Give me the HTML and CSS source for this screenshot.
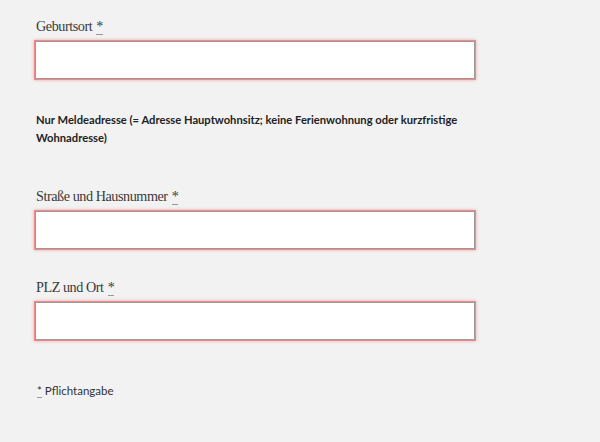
FILE: index.html
```html
<!DOCTYPE html>
<html lang="de">
<head>
<meta charset="utf-8">
<link rel="stylesheet" href="styles.css">
</head>
<body>
<form class="form">
  <div class="field field-first">
    <label class="label" for="geburtsort">Geburtsort <abbr class="req">*</abbr></label>
    <input class="input" id="geburtsort" type="text">
  </div>
  <p class="note">Nur Meldeadresse (= Adresse Hauptwohnsitz; keine Ferienwohnung oder kurzfristige Wohnadresse)</p>
  <div class="field field-street">
    <label class="label" for="strasse">Straße und Hausnummer <abbr class="req">*</abbr></label>
    <input class="input" id="strasse" type="text">
  </div>
  <div class="field field-plz">
    <label class="label" for="plz">PLZ und Ort <abbr class="req">*</abbr></label>
    <input class="input" id="plz" type="text">
  </div>
  <p class="legend"><abbr class="req">*</abbr> Pflichtangabe</p>
</form>
</body>
</html>
```
FILE: styles.css
```css
html, body {
  margin: 0;
  padding: 0;
  background: #f2f2f2;
}
.form {
  width: 440px;
  padding: 17px 0 0 35px;
}
.field {
  display: flex;
  flex-direction: column;
}
.label {
  font-family: "Liberation Serif", serif;
  font-size: 14.2px;
  letter-spacing: -0.45px;
  line-height: 18px;
  color: #3a3a3a;
  padding-left: 1px;
  margin-bottom: 6px;
}
.req {
  text-decoration: none;
  border-bottom: 1px solid #999;
  line-height: 1;
  margin-left: 1px;
}
.input {
  box-sizing: border-box;
  height: 38px;
  width: 440px;
  margin: 0;
  border: 1px solid #9a9a9a;
  background: #fff;
  box-shadow: 0 0 0 1px #f08a8a, 0 0 3px 1px #f3a0a0;
  outline: none;
}
.note {
  margin: 32px 0 0 1px;
  font-family: Lato, sans-serif;
  font-weight: bold;
  font-size: 11.2px;
  line-height: 18px;
  color: #222;
}
.field-street {
  margin-top: 40px;
}
.field-plz {
  margin-top: 29px;
}
.legend {
  margin: 42px 0 0 1px;
  font-family: Lato, sans-serif;
  font-size: 11.5px;
  line-height: 18px;
  color: #333;
}
```
